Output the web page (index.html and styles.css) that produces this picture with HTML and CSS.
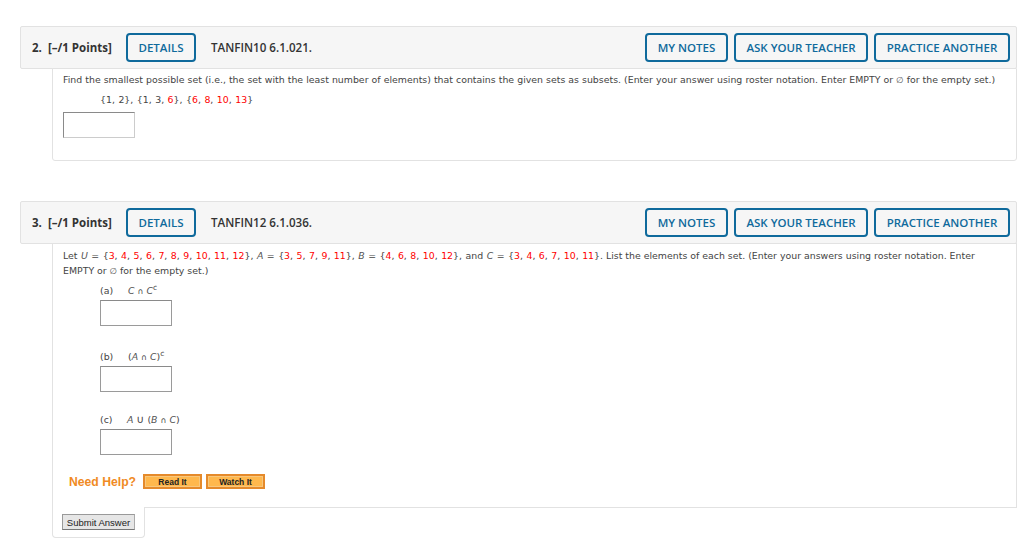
FILE: index.html
```html
<!DOCTYPE html>
<html lang="en">
<head>
<meta charset="utf-8">
<title>Questions</title>
<link rel="stylesheet" href="styles.css">
</head>
<body>
<section class="question first">
  <header class="qhead">
    <span class="qnum">2.</span>
    <span class="qpts">[–/1 Points]</span>
    <button class="btn details">DETAILS</button>
    <span class="qcode">TANFIN10 6.1.021.</span>
    <div class="actions">
      <button class="btn notes">MY NOTES</button>
      <button class="btn ask">ASK YOUR TEACHER</button>
      <button class="btn practice">PRACTICE ANOTHER</button>
    </div>
  </header>
  <div class="qbody q2body">
    <p class="line plain">Find the smallest possible set (i.e., the set with the least number of elements) that contains the given sets as subsets. (Enter your answer using roster notation. Enter EMPTY or <span class="empty">∅</span> for the empty set.)</p>
    <p class="line indent sets math">{1, 2}, {1, 3, <b>6</b>}, {<b>6</b>, <b>8</b>, <b>10</b>, <b>13</b>}</p>
    <div class="answer"></div>
  </div>
</section>
<section class="question">
  <header class="qhead">
    <span class="qnum">3.</span>
    <span class="qpts">[–/1 Points]</span>
    <button class="btn details">DETAILS</button>
    <span class="qcode">TANFIN12 6.1.036.</span>
    <div class="actions">
      <button class="btn notes">MY NOTES</button>
      <button class="btn ask">ASK YOUR TEACHER</button>
      <button class="btn practice">PRACTICE ANOTHER</button>
    </div>
  </header>
  <div class="qbody q3body">
    <p class="para"><span class="math">Let <i>U</i> = {<b>3</b>, <b>4</b>, <b>5</b>, <b>6</b>, <b>7</b>, <b>8</b>, <b>9</b>, <b>10</b>, <b>11</b>, <b>12</b>}, <i>A</i> = {<b>3</b>, <b>5</b>, <b>7</b>, <b>9</b>, <b>11</b>}, <i>B</i> = {<b>4</b>, <b>6</b>, <b>8</b>, <b>10</b>, <b>12</b>}, and <i>C</i> = {<b>3</b>, <b>4</b>, <b>6</b>, <b>7</b>, <b>10</b>, <b>11</b>}.</span> List the elements of each set. (Enter your answers using roster notation. Enter EMPTY or <span class="empty">∅</span> for the empty set.)</p>
    <div class="part part-a">
      <p class="plabel"><span class="pl">(a)</span><span class="expr"><i>C</i> <span class="op">∩</span> <i>C</i><sup>c</sup></span></p>
      <div class="answer wide"></div>
    </div>
    <div class="part part-b">
      <p class="plabel"><span class="pl">(b)</span><span class="expr">(<i>A</i> <span class="op">∩</span> <i>C</i>)<sup>c</sup></span></p>
      <div class="answer wide"></div>
    </div>
    <div class="part part-c">
      <p class="plabel"><span class="pl">(c)</span><span class="expr tight"><i>A</i> <span class="cup">∪</span> (<i>B</i> <span class="op">∩</span> <i>C</i>)</span></p>
      <div class="answer wide"></div>
    </div>
    <div class="help">
      <span class="helptext">Need Help?</span>
      <button class="hbtn">Read It</button>
      <button class="hbtn">Watch It</button>
    </div>
  </div>
  <div class="submit-tab"><button class="submit">Submit Answer</button></div>
</section>
</body>
</html>
```
FILE: styles.css
```css
* { box-sizing: border-box; }
html, body { margin: 0; background: #fff; }
body { padding: 26px 7px 0 20px; height: 545px; overflow: hidden; font-family: "DejaVu Sans", sans-serif; font-size: 9.4px; color: #444; }
p { margin: 0; }
.question + .question { margin-top: 40px; }
.qhead { height: 43px; display: flex; align-items: center; background: #f6f6f6; border: 1px solid #e2e2e2; border-radius: 2px; padding: 0 6px 0 11px; font-family: "Open Sans", sans-serif; font-size: 11.6px; font-weight: 600; color: #333; }
.qnum { font-weight: 700; width: 16px; font-size: 11.5px; }
.qpts { font-weight: 700; width: 78px; font-size: 11.5px; }
.qcode { margin-left: 15px; }
.btn { height: 29px; padding: 0; background: transparent; border: 2px solid #0f6a9c; border-radius: 4px; color: #0f6a9c; font-family: "Open Sans", sans-serif; font-size: 11.5px; font-weight: 600; }
.details { width: 70px; }
.notes { width: 83px; }
.ask { width: 134px; }
.practice { width: 136px; }
.actions { margin-left: auto; display: flex; gap: 6px; }
.qbody { margin-left: 32px; margin-top: -1px; border: 1px solid #e2e2e2; padding: 0 10px; background: #fff; }
.q2body { height: 93px; border-radius: 0 0 3px 3px; }
.q3body { height: 265px; }
.line { padding-top: 4px; line-height: 13px; white-space: nowrap; }
.line.plain { word-spacing: 0.08px; }
.line.sets { padding-top: 6px; }
.indent { padding-left: 37px; }
.math { word-spacing: 0.5px; }
b { font-weight: 400; color: #f00; }
i { font-style: italic; color: #555; }
.empty { font-size: 8.5px; }
.answer { width: 72px; height: 26px; margin-top: 6px; border: 1px solid #ccc; border-top-color: #8a8a8a; border-left-color: #8a8a8a; background: #fff; }
.answer.wide { margin-top: 0; border-color: #9a9a9a; border-top-color: #8a8a8a; }
.para { padding-top: 4px; line-height: 15px; width: 925px; }
.part { padding-left: 37px; }
.part-a { margin-top: 4px; }
.part-b { margin-top: 23px; }
.part-c { margin-top: 20px; }
.plabel { line-height: 16px; height: 17px; white-space: nowrap; display: flex; }
.pl { width: 28px; }
.expr.tight { margin-left: -1px; }
.op { font-size: 8px; }
.cup { font-size: 11px; line-height: 10px; }
sup { font-size: 7.5px; line-height: 0; }
.help { display: flex; align-items: center; margin-top: 19px; margin-left: 6px; }
.helptext { font-family: "Liberation Sans", sans-serif; font-size: 12.2px; font-weight: 700; color: #f08a24; width: 74px; }
.hbtn { width: 59px; height: 15px; margin-right: 4px; padding: 0; background: #ffb84d; border: 2px solid #e58a2b; box-shadow: inset 0 0 0 1px #f8c77c; font-family: "Liberation Sans", sans-serif; font-size: 8.5px; font-weight: 700; color: #222; }
.submit-tab { margin-left: 32px; margin-top: -1px; width: 93px; height: 31px; padding: 7px 0 0 9px; position: relative; background: #fff; border: 1px solid #e2e2e2; border-top: 0; border-radius: 0 0 4px 4px; }
.submit { display: block; width: 73px; height: 16px; padding: 0; background: #e6e6e6; border: 1px solid #999; border-bottom-color: #777; border-right-color: #aaa; border-radius: 0; font-family: "Liberation Sans", sans-serif; font-size: 9.5px; color: #222; }
```
